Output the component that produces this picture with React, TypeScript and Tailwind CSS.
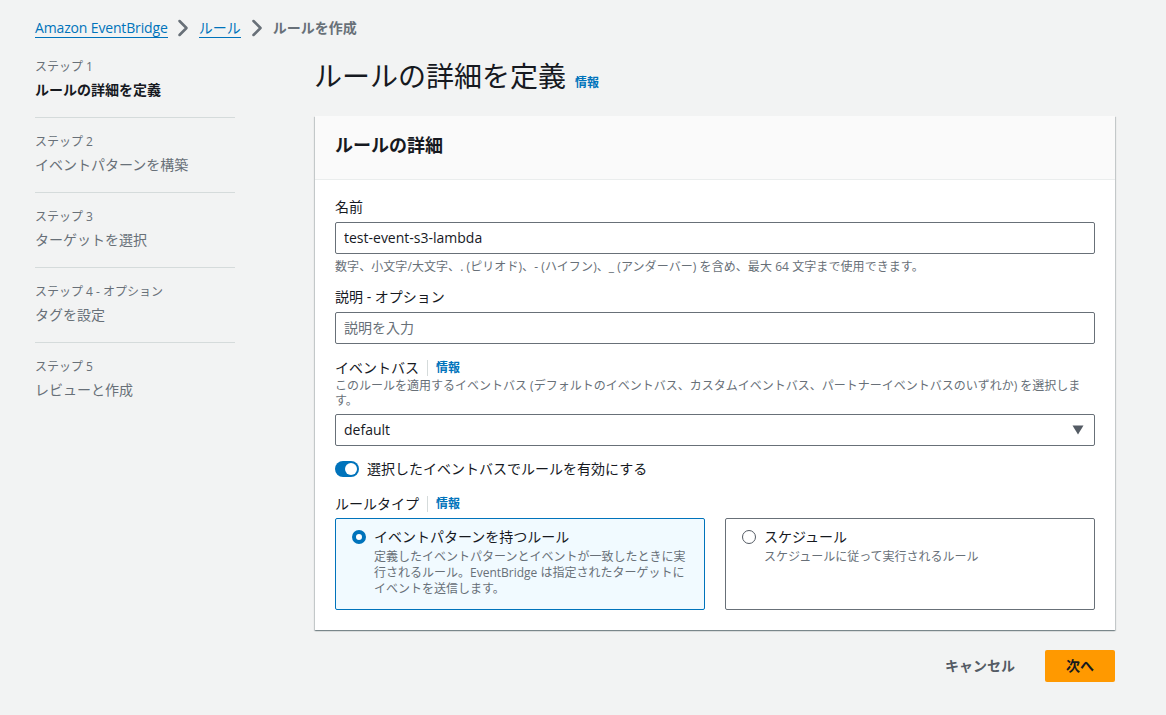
import { ChevronRight } from 'lucide-react';

const FONT = "font-['Open_Sans','Noto_Sans_CJK_JP',sans-serif]";

const steps = [
  { step: 'ステップ 1', label: 'ルールの詳細を定義', active: true },
  { step: 'ステップ 2', label: 'イベントパターンを構築' },
  { step: 'ステップ 3', label: 'ターゲットを選択' },
  { step: 'ステップ 4 - オプション', label: 'タグを設定' },
  { step: 'ステップ 5', label: 'レビューと作成' },
];

function InfoLabel({ text }: { text: string }) {
  return (
    <div className="flex items-center h-[20px] text-[14px] leading-[20px] text-[#16191f]">
      <span>{text}</span>
      <span className="ml-[8px] h-[16px] border-l border-[#d5dbdb]" />
      <a className="ml-[8px] text-[12px] font-bold text-[#0073bb]">情報</a>
    </div>
  );
}

function TextField({ value, placeholder }: { value?: string; placeholder?: string }) {
  return (
    <input
      readOnly
      value={value}
      placeholder={placeholder}
      className="block w-full h-[32px] px-[8px] pb-[2px] text-[14px] text-[#16191f] placeholder:text-[#687078] bg-white border border-[#687078] rounded-[2px] outline-none"
    />
  );
}

export default function App() {
  return (
    <div className={`${FONT} relative h-[715px] overflow-hidden bg-[#f2f3f3] pl-[35px] pr-[51px] pt-[18px] text-[#16191f]`}>
      <nav className="flex items-center h-[20px] text-[14px] leading-[20px]">
        <a className="text-[#0073bb] border-b border-[#0073bb] leading-[19px] tracking-[-0.15px]">Amazon EventBridge</a>
        <ChevronRight className="ml-[1px] mr-[2px] w-[28px] h-[28px] text-[#687078]" strokeWidth={2.2} />
        <a className="text-[#0073bb] border-b border-[#0073bb] leading-[19px]">ルール</a>
        <ChevronRight className="mx-[2px] w-[28px] h-[28px] text-[#687078]" strokeWidth={2.2} />
        <span className="font-bold text-[#687078]">ルールを作成</span>
      </nav>

      <div className="flex mt-[18px]">
        <aside className="w-[200px] shrink-0">
          {steps.map((s, i) => (
            <div key={s.step} className={i < steps.length - 1 ? 'h-[62px] border-b border-[#d5dbdb] mb-[13px]' : ''}>
              <div className="text-[12px] leading-[20px] text-[#687078] pt-[1px] h-[21px]">{s.step}</div>
              <div className={`mt-[3px] text-[14px] leading-[20px] ${s.active ? 'font-bold text-[#16191f]' : 'text-[#687078]'}`}>{s.label}</div>
            </div>
          ))}
        </aside>

        <main className="ml-[80px] flex-1">
          <div className="flex items-center h-[40px]">
            <h1 className="-ml-[1px] text-[28px] leading-[40px] font-normal">ルールの詳細を定義</h1>
            <a className="ml-[9px] mt-[14px] text-[12px] font-bold text-[#0073bb]">情報</a>
          </div>

          <section className="mt-[20px] bg-white shadow-[0_1px_1px_0_rgba(0,28,36,0.3),1px_1px_1px_0_rgba(0,28,36,0.15),-1px_1px_1px_0_rgba(0,28,36,0.15)]">
            <header className="h-[64px] flex items-center px-[20px] pb-[6px] bg-[#fafafa] border-b border-[#eaeded]">
              <h2 className="text-[18px] leading-[22px] font-bold">ルールの詳細</h2>
            </header>
            <div className="px-[20px] pt-[17px] pb-[20px]">
              <div className="text-[14px] leading-[20px]">名前</div>
              <div className="mt-[5px]"><TextField value="test-event-s3-lambda" /></div>
              <p className="mt-[4px] text-[12px] leading-[18px] tracking-[0.07px] text-[#687078]">数字、小文字/大文字、. (ピリオド)、- (ハイフン)、_ (アンダーバー) を含め、最大 64 文字まで使用できます。</p>

              <div className="mt-[11px] text-[14px] leading-[20px]">説明 - オプション</div>
              <div className="mt-[5px]"><TextField placeholder="説明を入力" /></div>

              <div className="mt-[14px]"><InfoLabel text="イベントバス" /></div>
              <p className="text-[12px] leading-[15px] text-[#687078]">このルールを適用するイベントバス (デフォルトのイベントバス、カスタムイベントバス、パートナーイベントバスのいずれか) を選択します。</p>
              <div className="mt-[6px] h-[32px] flex items-center justify-between px-[8px] pb-[2px] bg-white border border-[#687078] rounded-[2px] text-[14px]">
                <span>default</span>
                <svg viewBox="0 0 12 10" className="w-[12px] h-[10px] mr-[2px] mt-[2px] fill-[#545b64]"><path d="M0.5 0.5h11L6 9.5z" /></svg>
              </div>

              <div className="mt-[13px] flex items-center h-[20px] text-[14px]">
                <span className="relative w-[24px] h-[16px] rounded-full bg-[#0073bb]">
                  <span className="absolute right-[2px] top-[2px] w-[12px] h-[12px] rounded-full bg-white" />
                </span>
                <span className="ml-[8px] -mt-[2px]">選択したイベントバスでルールを有効にする</span>
              </div>

              <div className="mt-[15px]"><InfoLabel text="ルールタイプ" /></div>

              <div className="mt-[4px] grid grid-cols-2 gap-[20px]">
                <div className="h-[92px] flex px-[16px] pt-[8px] bg-[#f1faff] border border-[#0073bb] rounded-[2px]">
                  <span className="mt-[3px] shrink-0 w-[14px] h-[14px] rounded-full border-[4px] border-[#0073bb] bg-white" />
                  <div className="ml-[8px]">
                    <div className="text-[14px] leading-[20px]">イベントパターンを持つルール</div>
                    <p className="mt-[2px] text-[12px] leading-[16px] text-[#687078]">定義したイベントパターンとイベントが一致したときに実行されるルール。EventBridge は指定されたターゲットにイベントを送信します。</p>
                  </div>
                </div>
                <div className="h-[92px] flex px-[16px] pt-[8px] bg-white border border-[#687078] rounded-[2px]">
                  <span className="mt-[3px] shrink-0 w-[14px] h-[14px] rounded-full border border-[#545b64] bg-white" />
                  <div className="ml-[8px]">
                    <div className="text-[14px] leading-[20px]">スケジュール</div>
                    <p className="mt-[2px] text-[12px] leading-[16px] text-[#687078]">スケジュールに従って実行されるルール</p>
                  </div>
                </div>
              </div>
            </div>
          </section>

          <div className="mt-[20px] flex justify-end items-center">
            <button type="button" className="h-[32px] px-[20px] pb-[2px] text-[14px] font-bold text-[#545b64]">キャンセル</button>
            <button type="button" className="ml-[10px] w-[70px] h-[32px] pb-[2px] text-[14px] font-bold text-[#16191f] bg-[#ff9900] rounded-[2px]">次へ</button>
          </div>
        </main>
      </div>
    </div>
  );
}
